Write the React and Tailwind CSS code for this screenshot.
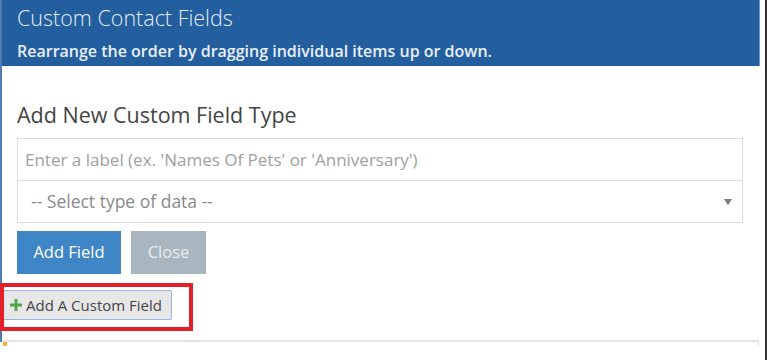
import React from "react";

export default function App() {
  return (
    <div className="relative w-[767px] h-[360px] bg-white overflow-hidden flex font-['Open_Sans',sans-serif]">
      <div className="w-[765px] h-full flex flex-col">
        <div className="w-[760px] h-[345px] border-l-2 border-[#4f7bb0] flex flex-col">
          <div className="bg-[#235e9f] border-r border-[#6f98c8] pl-[15px] pt-[4px] pb-[4px]">
            <div className="text-[21.5px] leading-[28px] font-light text-[#e4ecf6]">Custom Contact Fields</div>
            <div className="mt-[8px] text-[16px] leading-[22px] font-semibold text-[#e9eff7]">
              Rearrange the order by dragging individual items up or down.
            </div>
          </div>
          <div className="px-[15px] flex flex-col">
            <div className="mt-[34px] text-[21.5px] leading-[30px] text-[#444444]">Add New Custom Field Type</div>
            <div className="mt-[8px] w-[726px] h-[43px] border border-[#dddddd] flex items-center pl-[7px] text-[17px] text-[#a0a0a0]">
              Enter a label (ex. 'Names Of Pets' or 'Anniversary')
            </div>
            <div className="w-[726px] h-[42px] border border-t-0 border-[#dddddd] flex items-center justify-between pl-[13px] pr-[10px] text-[17.5px] text-[#8a8a8a]">
              <span>-- Select type of data --</span>
              <svg width="8" height="6" viewBox="0 0 8 6" className="mt-[1px]">
                <polygon points="0,0 8,0 4,6" fill="#7a7a7a" />
              </svg>
            </div>
            <div className="mt-[8px] flex gap-[10px]">
              <div className="w-[104px] h-[43px] bg-[#3f86c7] flex items-center justify-center text-[16.5px] text-white">
                Add Field
              </div>
              <div className="w-[75px] h-[43px] bg-[#a9b6bf] flex items-center justify-center text-[16.5px] text-[#e9edf0]">
                Close
              </div>
            </div>
            <div className="mt-[16px] ml-[-14px] w-[169px] h-[30px] bg-[#e7e7e7] border border-[#93b6e2] rounded-[2px] flex items-center pl-[6px] gap-[4px] text-[15px] text-[#454545]">
              <svg width="12" height="12" viewBox="0 0 12 12">
                <rect x="4.5" y="0" width="3" height="12" fill="#4fa84a" />
                <rect x="0" y="4.5" width="12" height="3" fill="#4fa84a" />
              </svg>
              <span>Add A Custom Field</span>
            </div>
          </div>
        </div>
        <div className="relative ml-[3px] w-[756px] mt-[-2px] h-[20px] border-t-2 border-[#e4e4e4]">
          <div className="absolute left-0 top-0 w-[4px] h-[4px] bg-[#f2b632]"></div>
          <div className="absolute right-0 top-0 w-[1px] h-[4px] bg-[#dedede]"></div>
        </div>
      </div>
      <div className="w-[2px] h-full bg-[#2e2e2e]"></div>
      <div className="absolute left-0 top-[283px] w-[193px] h-[48px] border-4 border-[#e3202a] pointer-events-none"></div>
    </div>
  );
}
